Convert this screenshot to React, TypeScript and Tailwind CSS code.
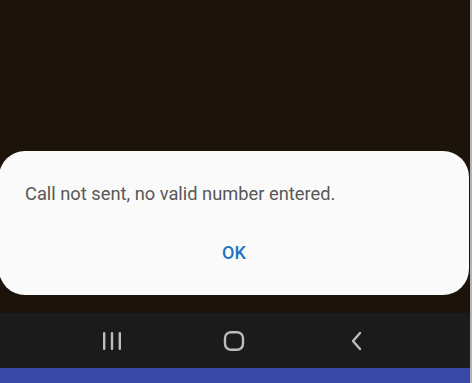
const App = () => {
  return (
    <div className="flex h-[383px] w-[472px] overflow-hidden font-['Roboto',sans-serif]">
      <div className="flex w-[470px] flex-col">
        <div className="flex h-[313px] flex-col justify-end bg-[#1c140b] pb-[18px]">
          <div className="ml-[-1px] flex h-[144px] w-[470px] flex-col rounded-[26px] bg-[#fafafa]">
            <p className="pl-[26px] pt-[32px] text-[18.3px] leading-[21px] text-[#585858]">
              Call not sent, no valid number entered.
            </p>
            <div className="mt-[38px] flex justify-center">
              <span className="text-[18px] font-medium leading-[21px] text-[#1f73c4]">
                OK
              </span>
            </div>
          </div>
        </div>
        <div className="flex h-[55px] items-center bg-[#1b1b1b] pl-[101px]">
          <svg width="22" height="20" viewBox="0 0 22 20">
            <rect x="2" y="1" width="2.4" height="18" rx="1" fill="#bdbdbd" />
            <rect x="9.8" y="1" width="2.4" height="18" rx="1" fill="#bdbdbd" />
            <rect x="17.6" y="1" width="2.4" height="18" rx="1" fill="#bdbdbd" />
          </svg>
          <svg width="22" height="20" viewBox="0 0 22 20" className="ml-[100px]">
            <rect x="2" y="1.2" width="18" height="17.6" rx="6" fill="none" stroke="#bdbdbd" strokeWidth="2.4" />
          </svg>
          <svg width="16" height="20" viewBox="0 0 16 20" className="ml-[104px]">
            <path d="M11 2 L4 10 L11 18" fill="none" stroke="#bdbdbd" strokeWidth="2.4" strokeLinecap="round" strokeLinejoin="round" />
          </svg>
        </div>
        <div className="h-[15px] bg-[#3a48a8]" />
      </div>
      <div className="w-[2px] bg-[#b4b4b4]" />
    </div>
  );
};

export default App;
